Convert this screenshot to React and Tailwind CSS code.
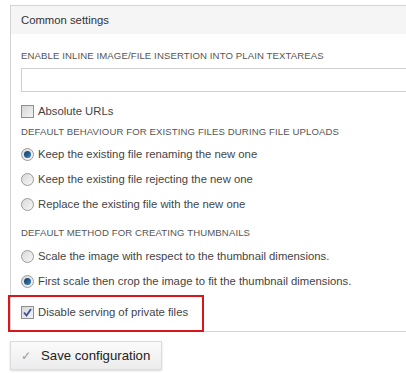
import React from 'react';

const font = { fontFamily: '"Liberation Sans", Arial, sans-serif' };

const Radio = ({ checked }) => (
  <span className="relative inline-flex h-[13px] w-[13px] shrink-0 items-center justify-center rounded-full border border-[#9a9b9b] bg-gradient-to-br from-[#d9d9d9] to-[#f7f7f7]">
    {checked && <span className="h-[7px] w-[7px] rounded-full bg-gradient-to-br from-[#0d3b66] to-[#3b86c4]" />}
  </span>
);

const Checkbox = ({ checked }) => (
  <span className="relative inline-flex h-[13px] w-[13px] shrink-0 items-center justify-center border border-[#8e8f8f] bg-gradient-to-br from-[#d6d6d6] to-[#f4f4f4]">
    {checked && (
      <svg width="9" height="9" viewBox="0 0 9 9">
        <path d="M1 4.5 L3.5 7.5 L8 1" fill="none" stroke="#3a4fa0" strokeWidth="1.8" />
      </svg>
    )}
  </span>
);

const Label = ({ children }) => (
  <div className="text-[9.6px] uppercase tracking-[0.1px] text-[#555]">{children}</div>
);

const Option = ({ radio, checked, children }) => (
  <div className="flex h-[25px] items-center gap-[4px] text-[11.3px] text-[#444]">
    {radio ? <Radio checked={checked} /> : <Checkbox checked={checked} />}
    <span>{children}</span>
  </div>
);

export default function App() {
  return (
    <div className="relative h-[373px] w-[406px] overflow-hidden bg-white" style={font}>
      <div className="absolute left-[10px] top-[5px] w-[420px] border border-[#d4d4d4]">
        <div className="flex h-[28px] items-center bg-[#f5f5f5] pl-[10px] text-[11.3px] text-[#333]">Common settings</div>
        <div className="pl-[10px] pt-[15px] pb-[6px]">
          <Label>Enable inline image/file insertion into plain textareas</Label>
          <div className="mt-[5px] h-[24px] border border-[#cfcfcf] bg-white" />
          <div className="mt-[7px]">
            <Option checked={false}>Absolute URLs</Option>
          </div>
          <div className="mt-[1px]">
            <Label>Default behaviour for existing files during file uploads</Label>
          </div>
          <div className="mt-[2px]">
            <Option radio checked>Keep the existing file renaming the new one</Option>
            <Option radio>Keep the existing file rejecting the new one</Option>
            <Option radio>Replace the existing file with the new one</Option>
          </div>
          <div className="mt-[9px]">
            <Label>Default method for creating thumbnails</Label>
          </div>
          <div className="mt-[4px]">
            <Option radio>Scale the image with respect to the thumbnail dimensions.</Option>
            <Option radio checked>First scale then crop the image to fit the thumbnail dimensions.</Option>
          </div>
          <div className="mt-[6px]">
            <Option checked>Disable serving of private files</Option>
          </div>
        </div>
      </div>
      <div className="pointer-events-none absolute left-[8px] top-[295px] h-[37px] w-[196px] border-2 border-[#d9161c]" />
      <button className="absolute left-[10px] top-[341px] flex h-[29px] w-[152px] items-center border border-[#dcdcdc] bg-gradient-to-b from-[#fbfbfb] to-[#ececec] shadow-[0_1px_2px_rgba(0,0,0,0.15)]">
        <span className="w-[30px] text-center text-[12px] text-[#9a9a9a]">✓</span>
        <span className="text-[13.2px] text-[#222]">Save configuration</span>
      </button>
    </div>
  );
}
